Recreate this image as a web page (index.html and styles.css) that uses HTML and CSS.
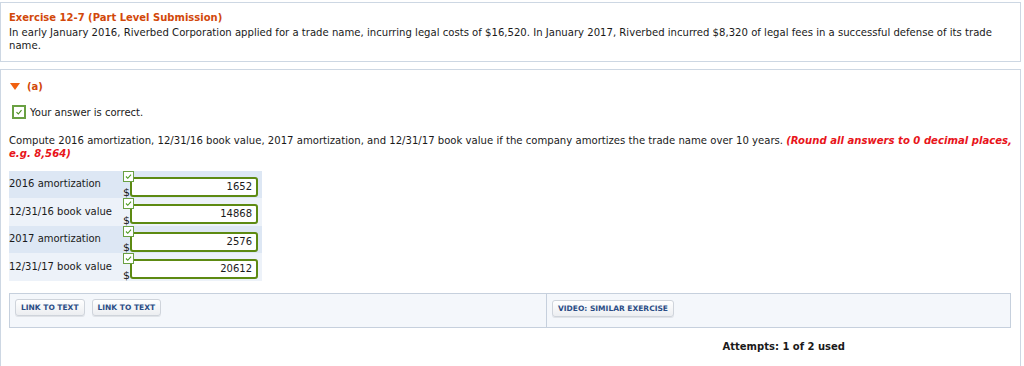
FILE: index.html
```html
<!DOCTYPE html>
<html>
<head>
<meta charset="utf-8">
<link rel="stylesheet" href="styles.css">
</head>
<body>
<div class="problem">
  <div class="title">Exercise 12-7 (Part Level Submission)</div>
  <div class="text">In early January 2016, Riverbed Corporation applied for a trade name, incurring legal costs of $16,520. In January 2017, Riverbed incurred $8,320 of legal fees in a successful defense of its trade name.</div>
</div>
<div class="part">
  <div class="part-head"><span class="tri"></span><span class="part-label">(a)</span></div>
  <div class="correct"><span class="chk big"><svg viewBox="0 0 12 12" width="12" height="12"><path d="M3 6.2 L5.2 8.4 L9 3.8" fill="none" stroke="#4a8a1e" stroke-width="1.3"/></svg></span>Your answer is correct.</div>
  <p class="question">Compute 2016 amortization, 12/31/16 book value, 2017 amortization, and 12/31/17 book value if the company amortizes the trade name over 10 years. <b class="hint">(Round all answers to 0 decimal places, e.g. 8,564)</b></p>
  <div class="answers">
    <div class="row dark h27"><div class="lbl">2016 amortization</div><div class="inp"><span class="chk small"><svg viewBox="0 0 10 10" width="9" height="9"><path d="M2.2 5 L4.2 7 L7.8 3" fill="none" stroke="#4a9a1e" stroke-width="1.2"/></svg></span><span class="dollar">$</span><span class="box">1652</span></div></div>
    <div class="row light h28"><div class="lbl">12/31/16 book value</div><div class="inp"><span class="chk small"><svg viewBox="0 0 10 10" width="9" height="9"><path d="M2.2 5 L4.2 7 L7.8 3" fill="none" stroke="#4a9a1e" stroke-width="1.2"/></svg></span><span class="dollar">$</span><span class="box">14868</span></div></div>
    <div class="row dark h27"><div class="lbl">2017 amortization</div><div class="inp"><span class="chk small"><svg viewBox="0 0 10 10" width="9" height="9"><path d="M2.2 5 L4.2 7 L7.8 3" fill="none" stroke="#4a9a1e" stroke-width="1.2"/></svg></span><span class="dollar">$</span><span class="box">2576</span></div></div>
    <div class="row light h28"><div class="lbl">12/31/17 book value</div><div class="inp"><span class="chk small"><svg viewBox="0 0 10 10" width="9" height="9"><path d="M2.2 5 L4.2 7 L7.8 3" fill="none" stroke="#4a9a1e" stroke-width="1.2"/></svg></span><span class="dollar">$</span><span class="box">20612</span></div></div>
  </div>
  <div class="links">
    <div class="links-left"><span class="btn">LINK TO TEXT</span><span class="btn">LINK TO TEXT</span></div>
    <div class="links-right"><span class="btn video">VIDEO: SIMILAR EXERCISE</span></div>
  </div>
  <div class="attempts">Attempts: 1 of 2 used</div>
</div>
</body>
</html>
```
FILE: styles.css
```css
html, body {
  margin: 0;
  padding: 0;
  background: #fff;
}
body {
  font-family: "DejaVu Sans", Verdana, sans-serif;
  font-size: 10px;
  color: #1a1a1a;
  width: 1021px;
  height: 366px;
  overflow: hidden;
}
.problem {
  margin-top: 2px;
  border: 1px solid #cdd7e3;
  padding: 8px 8px 7px 8px;
  height: 43px;
}
.title {
  color: #d2480a;
  font-weight: bold;
  font-size: 10px;
  line-height: 14px;
}
.text {
  line-height: 13px;
  margin-top: 1px;
  font-size: 10.1px;
}
.part {
  margin-top: 7px;
  border: 1px solid #cdd7e3;
  border-bottom: none;
  height: 300px;
  padding: 0 8px;
}
.part-head {
  display: flex;
  align-items: center;
  height: 14px;
  margin-top: 9px;
}
.tri {
  width: 0;
  height: 0;
  border-left: 5.5px solid transparent;
  border-right: 5.5px solid transparent;
  border-top: 7px solid #f06010;
  margin-left: 1px;
}
.part-label {
  color: #d2480a;
  font-weight: bold;
  margin-left: 7px;
}
.correct {
  display: flex;
  align-items: center;
  margin-top: 12px;
  margin-left: 3px;
  height: 14px;
}
.chk {
  display: inline-flex;
  align-items: center;
  justify-content: center;
  background: #fff;
  box-sizing: border-box;
  border: 1px solid #6aa042;
}
.chk.big {
  width: 14px;
  height: 14px;
  border-width: 2px;
  margin-right: 4px;
}
.question {
  margin: 15px 0 0 0;
  line-height: 13px;
  font-size: 10.1px;
}
.hint {
  color: #e8141a;
  font-weight: bold;
  font-style: italic;
}
.answers {
  margin-top: 11px;
  width: 253px;
  display: flex;
  flex-direction: column;
}
.row {
  display: flex;
}
.row.h27 { height: 27px; }
.row.h28 { height: 28px; }
.row.dark { background: #dde7f4; }
.row.light { background: #edf2f9; }
.lbl {
  width: 111px;
  display: flex;
  align-items: center;
  padding-bottom: 2px;
}
.inp {
  position: relative;
  flex: 1;
}
.chk.small {
  position: absolute;
  left: 3px;
  top: 0;
  width: 11px;
  height: 11px;
  z-index: 2;
}
.dollar {
  position: absolute;
  left: 3px;
  bottom: 0;
  line-height: 11px;
  font-size: 11px;
}
.box {
  position: absolute;
  left: 10px;
  top: 6px;
  width: 128px;
  height: 20px;
  box-sizing: border-box;
  border: 2px solid #5d8a12;
  border-radius: 3px;
  background: #fff;
  text-align: right;
  padding-right: 4px;
  line-height: 16px;
}
.links {
  display: flex;
  margin-top: 12px;
  border: 1px solid #c6d0dd;
  background: #f4f7fb;
  height: 33px;
  margin-right: 1px;
}
.links-left {
  width: 531px;
  border-right: 1px solid #c6d0dd;
  display: flex;
  align-items: flex-start;
  gap: 7px;
  padding: 5px 0 0 5px;
}
.links-right {
  flex: 1;
  display: flex;
  align-items: flex-start;
  padding: 6px 0 0 5px;
}
.btn {
  display: inline-block;
  font-size: 7.5px;
  font-weight: bold;
  color: #2b4d86;
  background: linear-gradient(#ffffff, #eceef1);
  border: 1px solid #cfd4db;
  border-radius: 3px;
  padding: 0 5px;
  height: 15px;
  line-height: 15px;
  box-shadow: 0 1px 0 #e0e3e8;
}
.attempts {
  text-align: right;
  padding-right: 167px;
  font-weight: bold;
  margin-top: 13px;
}
```
